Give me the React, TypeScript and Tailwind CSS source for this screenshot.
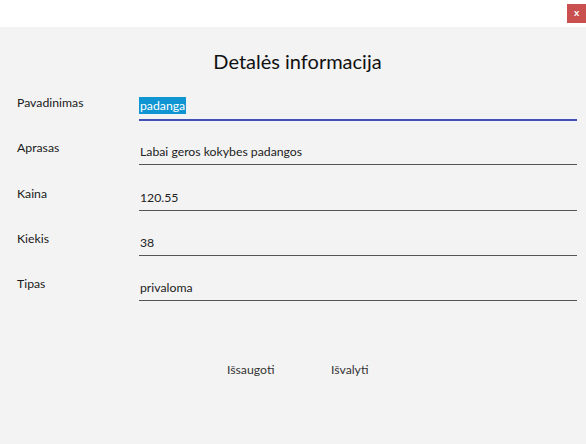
import React from 'react';

const rows = [
  {label: "Pavadinimas", value: "padanga", focused: true, height: "h-[45px]"},
  {label: "Aprasas", value: "Labai geros kokybes padangos", focused: false, height: "h-[46px]"},
  {label: "Kaina", value: "120.55", focused: false, height: "h-[45px]"},
  {label: "Kiekis", value: "38", focused: false, height: "h-[45px]"},
  {label: "Tipas", value: "privaloma", focused: false, height: "h-[45px]"},
];

const App = () => {
  return (
    <div className="w-[586px] h-[444px] flex flex-col bg-[#f3f3f3] text-[12.25px] text-[#1a1a1a]"
         style={{fontFamily: '"Segoe UI", Lato, sans-serif'}}>

      {/* Window bar */}
      <div className="h-[27px] bg-white flex justify-end items-start pt-[4px]">
        <button className="w-[19px] h-[19px] bg-[#c9504f] text-white text-[10px] font-bold leading-[17px] flex justify-center">
          x
        </button>
      </div>

      <div className="h-[63px] flex justify-center pt-[21px] pl-[9px]">
        <h1 className="text-[20px] leading-[26px] text-[#111]">Detalės informacija</h1>
      </div>

      <div className="flex flex-col">
        {rows.map((row) => (
          <div key={row.label} className={`${row.height} flex items-start`}>
            <p className="w-[139px] pl-[17px] pt-[5px] leading-[16px]">{row.label}</p>
            {row.focused ? (
              <div className="w-[438px] h-[31px] border-b-2 border-[#3f51b5] pt-[7px]">
                <span className="inline-block h-[17px] leading-[17px] bg-[#0f96d2] text-white px-[1px]">
                  {row.value}
                </span>
              </div>
            ) : (
              <div className="w-[438px] h-[30px] border-b border-[#555] pt-[9px] pl-[1px] leading-[15px] text-[#222]">
                {row.value}
              </div>
            )}
          </div>
        ))}
      </div>

      <div className="flex pt-[45px]">
        <div className="w-[227px]"/>
        <div className="w-[104px]">
          <button className="leading-[16px] text-[#333]">Išsaugoti</button>
        </div>
        <button className="leading-[16px] text-[#333]">Išvalyti</button>
      </div>
    </div>
  );
};

export default App;
